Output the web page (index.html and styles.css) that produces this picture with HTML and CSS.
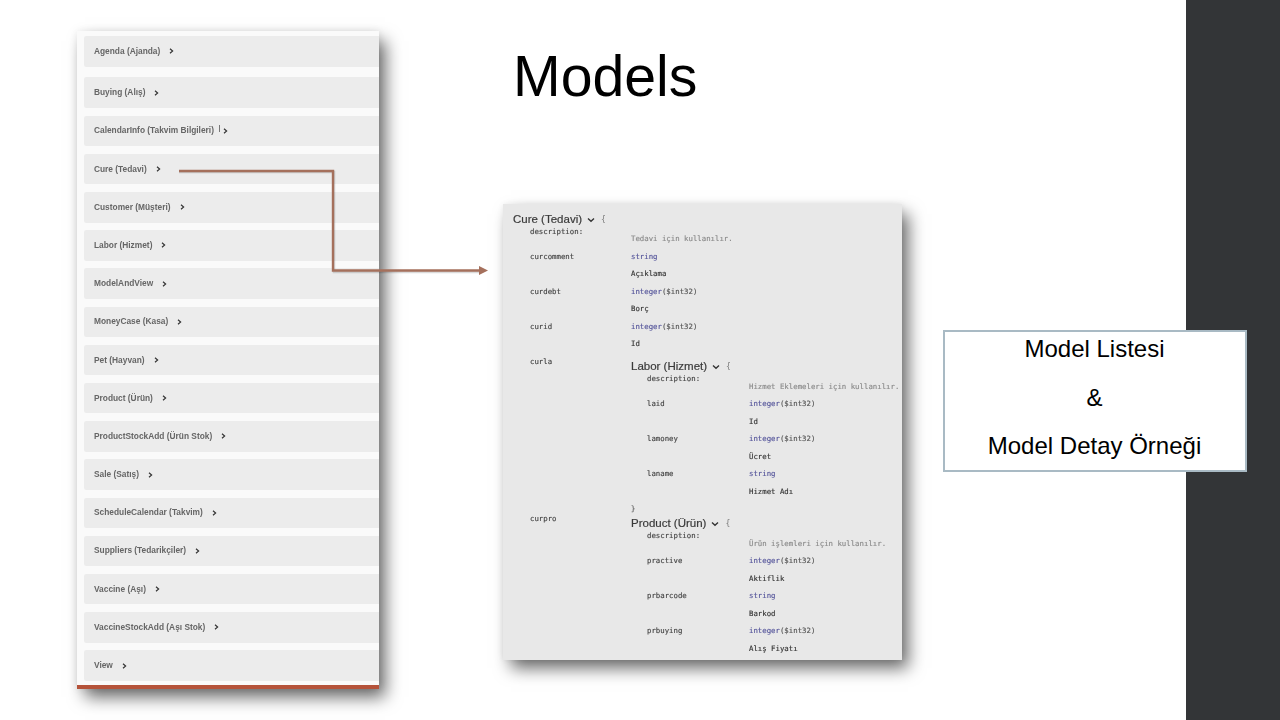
FILE: index.html
```html
<!DOCTYPE html>
<html lang="tr">
<head>
<meta charset="utf-8">
<title>Models</title>
<link rel="stylesheet" href="styles.css">
</head>
<body>
<main class="slide">
  <section class="list">
    <div class="row first"><span>Agenda (Ajanda)</span><svg class="chev" viewBox="0 0 5 6"><path d="M1 .8 3.6 3 1 5.2"/></svg></div>
    <div class="row"><span>Buying (Alış)</span><svg class="chev" viewBox="0 0 5 6"><path d="M1 .8 3.6 3 1 5.2"/></svg></div>
    <div class="row"><span>CalendarInfo (Takvim Bilgileri)</span><i class="caret"></i><svg class="chev near" viewBox="0 0 5 6"><path d="M1 .8 3.6 3 1 5.2"/></svg></div>
    <div class="row"><span>Cure (Tedavi)</span><svg class="chev" viewBox="0 0 5 6"><path d="M1 .8 3.6 3 1 5.2"/></svg></div>
    <div class="row"><span>Customer (Müşteri)</span><svg class="chev" viewBox="0 0 5 6"><path d="M1 .8 3.6 3 1 5.2"/></svg></div>
    <div class="row"><span>Labor (Hizmet)</span><svg class="chev" viewBox="0 0 5 6"><path d="M1 .8 3.6 3 1 5.2"/></svg></div>
    <div class="row"><span>ModelAndView</span><svg class="chev" viewBox="0 0 5 6"><path d="M1 .8 3.6 3 1 5.2"/></svg></div>
    <div class="row"><span>MoneyCase (Kasa)</span><svg class="chev" viewBox="0 0 5 6"><path d="M1 .8 3.6 3 1 5.2"/></svg></div>
    <div class="row"><span>Pet (Hayvan)</span><svg class="chev" viewBox="0 0 5 6"><path d="M1 .8 3.6 3 1 5.2"/></svg></div>
    <div class="row"><span>Product (Ürün)</span><svg class="chev" viewBox="0 0 5 6"><path d="M1 .8 3.6 3 1 5.2"/></svg></div>
    <div class="row"><span>ProductStockAdd (Ürün Stok)</span><svg class="chev" viewBox="0 0 5 6"><path d="M1 .8 3.6 3 1 5.2"/></svg></div>
    <div class="row"><span>Sale (Satış)</span><svg class="chev" viewBox="0 0 5 6"><path d="M1 .8 3.6 3 1 5.2"/></svg></div>
    <div class="row"><span>ScheduleCalendar (Takvim)</span><svg class="chev" viewBox="0 0 5 6"><path d="M1 .8 3.6 3 1 5.2"/></svg></div>
    <div class="row"><span>Suppliers (Tedarikçiler)</span><svg class="chev" viewBox="0 0 5 6"><path d="M1 .8 3.6 3 1 5.2"/></svg></div>
    <div class="row"><span>Vaccine (Aşı)</span><svg class="chev" viewBox="0 0 5 6"><path d="M1 .8 3.6 3 1 5.2"/></svg></div>
    <div class="row"><span>VaccineStockAdd (Aşı Stok)</span><svg class="chev" viewBox="0 0 5 6"><path d="M1 .8 3.6 3 1 5.2"/></svg></div>
    <div class="row"><span>View</span><svg class="chev" viewBox="0 0 5 6"><path d="M1 .8 3.6 3 1 5.2"/></svg></div>
  </section>

  <section class="middle">
    <h1 class="title">Models</h1>
    <div class="detail">
      <div class="detail-inner">
        <div class="model-head">Cure (Tedavi)<svg class="down" viewBox="0 0 8 6"><path d="M1 1.5 4 4.2 7 1.5"/></svg><span class="brace">{</span></div>
        <div class="prop desc"><div class="name">description:</div><div class="val note">Tedavi için kullanılır.</div></div>
        <div class="prop"><div class="name">curcomment</div><div class="val"><div class="type">string</div><div>Açıklama</div></div></div>
        <div class="prop"><div class="name">curdebt</div><div class="val"><div class="type">integer<em>($int32)</em></div><div>Borç</div></div></div>
        <div class="prop"><div class="name">curid</div><div class="val"><div class="type">integer<em>($int32)</em></div><div>Id</div></div></div>
        <div class="prop"><div class="name">curla</div><div class="val">
          <div class="model-head nested">Labor (Hizmet)<svg class="down" viewBox="0 0 8 6"><path d="M1 1.5 4 4.2 7 1.5"/></svg><span class="brace">{</span></div>
          <div class="prop desc"><div class="name">description:</div><div class="val note">Hizmet Eklemeleri için kullanılır.</div></div>
          <div class="prop"><div class="name">laid</div><div class="val"><div class="type">integer<em>($int32)</em></div><div>Id</div></div></div>
          <div class="prop"><div class="name">lamoney</div><div class="val"><div class="type">integer<em>($int32)</em></div><div>Ücret</div></div></div>
          <div class="prop"><div class="name">laname</div><div class="val"><div class="type">string</div><div>Hizmet Adı</div></div></div>
          <div class="close">}</div>
        </div></div>
        <div class="prop"><div class="name">curpro</div><div class="val">
          <div class="model-head nested">Product (Ürün)<svg class="down" viewBox="0 0 8 6"><path d="M1 1.5 4 4.2 7 1.5"/></svg><span class="brace">{</span></div>
          <div class="prop desc"><div class="name">description:</div><div class="val note">Ürün işlemleri için kullanılır.</div></div>
          <div class="prop"><div class="name">practive</div><div class="val"><div class="type">integer<em>($int32)</em></div><div>Aktiflik</div></div></div>
          <div class="prop"><div class="name">prbarcode</div><div class="val"><div class="type">string</div><div>Barkod</div></div></div>
          <div class="prop"><div class="name">prbuying</div><div class="val"><div class="type">integer<em>($int32)</em></div><div>Alış Fiyatı</div></div></div>
        </div></div>
      </div>
    </div>
  </section>

  <aside class="caption">
    <p>Model Listesi</p>
    <p>&amp;</p>
    <p>Model Detay Örneği</p>
  </aside>
  <div class="sidebar"></div>

  <svg class="connector" viewBox="0 0 1280 720">
    <path class="line-shadow" d="M179 172H334V272H481"/>
    <path class="line" d="M179 171H333V270.5H481"/>
    <path class="head" d="M479 266 488 270.5 479 275Z"/>
  </svg>
</main>
</body>
</html>
```
FILE: styles.css
```css
html, body {
  margin: 0;
  padding: 0;
  background: #fff;
}

.slide {
  position: relative;
  display: flex;
  align-items: flex-start;
  width: 1280px;
  height: 720px;
  overflow: hidden;
  background: #fff;
  font-family: "Liberation Sans", Arial, sans-serif;
}

/* Model list */
.list {
  flex: none;
  box-sizing: border-box;
  width: 302px;
  height: 658px;
  margin: 31px 0 0 77px;
  padding: 5px 0 0 7px;
  display: flex;
  flex-direction: column;
  gap: 7.7px;
  background: #fafafa;
  border-bottom: 4px solid #b5533a;
  box-shadow: 7px 9px 16px -1px rgba(0, 0, 0, .6), 0 0 8px rgba(0, 0, 0, .07);
}

.row {
  flex: none;
  height: 30.5px;
  display: flex;
  align-items: center;
  padding-left: 10px;
  background: #ececec;
  border-radius: 2px 0 0 2px;
  font-size: 8.35px;
  font-weight: 700;
  color: #666;
  white-space: nowrap;
}

.row span {
  position: relative;
  top: -.5px;
  filter: blur(.4px);
}

.row.first {
  margin-bottom: 3.3px;
}

.chev {
  width: 5px;
  height: 6px;
  margin-left: 9px;
  fill: none;
  stroke: #333;
  stroke-width: 1.2;
}

.chev.near {
  margin-left: 3px;
}

.caret {
  width: 1px;
  height: 7px;
  margin: -4px 0 0 5px;
  background: #777;
}

/* Middle column */
.middle {
  flex: none;
  width: 399px;
  margin-left: 124px;
}

.title {
  height: 204px;
  margin: 0 0 0 10px;
  padding-top: 42px;
  box-sizing: border-box;
  font-size: 57.2px;
  font-weight: 400;
  line-height: 68px;
  color: #000;
}

.detail {
  height: 456px;
  background: #e8e8e8;
  box-shadow: 7px 9px 16px -1px rgba(0, 0, 0, .6), 0 0 6px rgba(0, 0, 0, .06);
  overflow: hidden;
}

.detail-inner {
  padding: 8.5px 0 0 10px;
  font-family: "DejaVu Sans Mono", "Liberation Mono", monospace;
  font-size: 7.35px;
  line-height: 17.5px;
  color: #333;
  white-space: nowrap;
  -webkit-text-stroke: .15px currentColor;
  filter: blur(.35px);
}

.model-head {
  display: flex;
  align-items: center;
  height: 14px;
  font-family: "Liberation Sans", Arial, sans-serif;
  font-size: 11.5px;
  color: #3a3a3a;
  -webkit-text-stroke: .2px #3a3a3a;
}

.model-head.nested {
  margin-top: 7px;
}

.down {
  width: 8px;
  height: 6px;
  margin-left: 5px;
  fill: none;
  stroke: #333;
  stroke-width: 1.4;
}

.brace {
  margin-left: 6px;
  font-family: "DejaVu Sans Mono", monospace;
  font-size: 8px;
  color: #777;
  -webkit-text-stroke: 0;
}

.prop {
  display: grid;
  grid-template-columns: 101px 1fr;
  margin-left: 17px;
}

.val .prop {
  margin-left: 16px;
  grid-template-columns: 102px 1fr;
}

.name {
  color: #444;
}

.type {
  color: #55559a;
}

.type em {
  font-style: normal;
  color: #555;
}

.desc .name {
  line-height: 9px;
}

.desc .note {
  padding-top: 3.75px;
  color: #8a8a8a;
}

.close {
  height: 9.75px;
  color: #666;
}

/* Caption and sidebar */
.caption {
  flex: none;
  position: relative;
  z-index: 1;
  box-sizing: border-box;
  width: 304px;
  height: 142px;
  margin: 330px 0 0 41px;
  background: #fff;
  border: 2px solid #a9bac4;
  font-size: 24px;
  line-height: 48.7px;
  text-align: center;
  color: #000;
}

.caption p {
  margin: 0;
  height: 48.7px;
  position: relative;
  top: -7px;
  left: -.5px;
}

.sidebar {
  flex: none;
  width: 94px;
  height: 720px;
  margin-left: -61px;
  background: #333537;
}

/* Connector overlay */
.connector {
  position: absolute;
  left: 0;
  top: 0;
  width: 1280px;
  height: 720px;
  pointer-events: none;
}

.line {
  fill: none;
  stroke: #a5705c;
  stroke-width: 2.4;
}

.line-shadow {
  fill: none;
  stroke: rgba(0, 0, 0, .14);
  stroke-width: 2.5;
}

.head {
  fill: #a5705c;
}
```
